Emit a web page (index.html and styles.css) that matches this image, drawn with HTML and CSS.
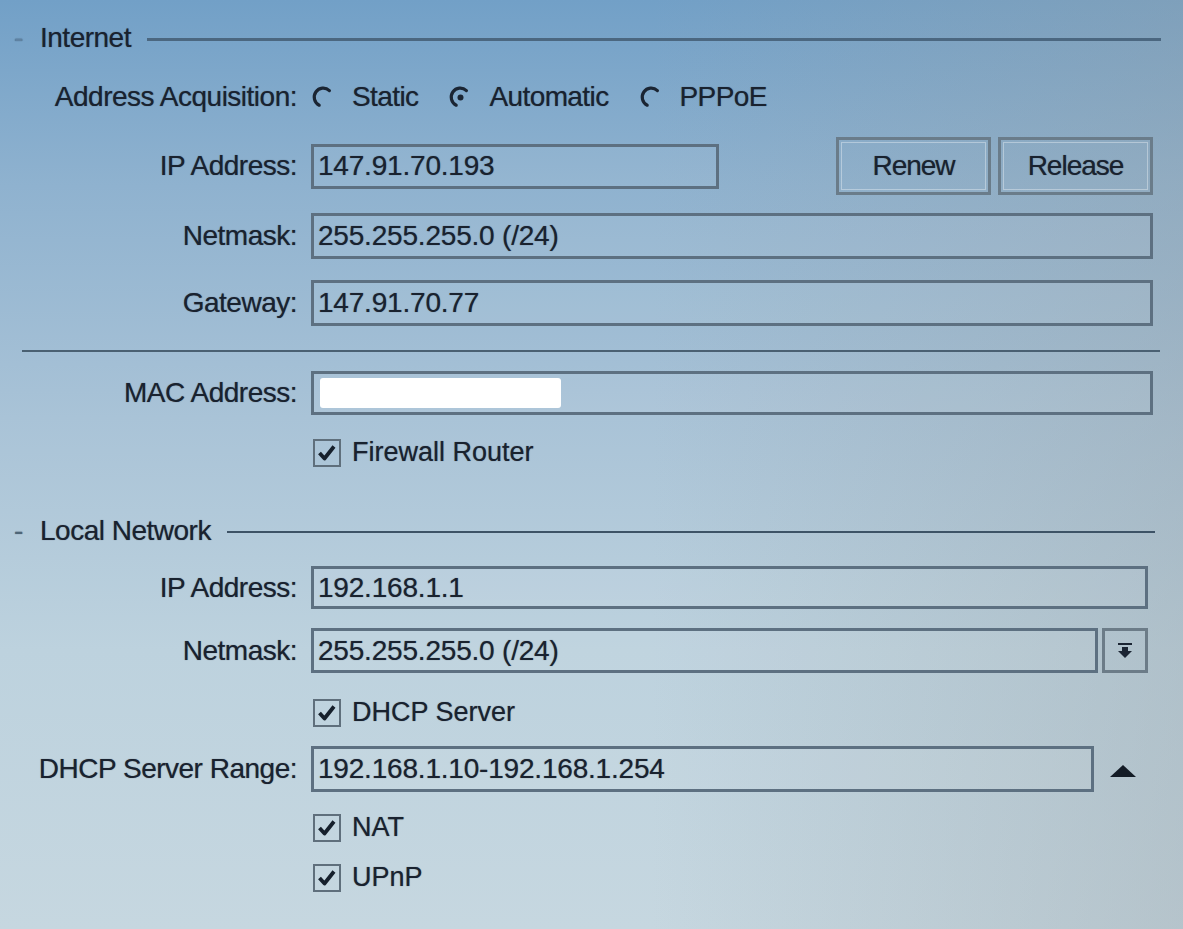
FILE: index.html
```html
<!DOCTYPE html>
<html>
<head>
<meta charset="utf-8">
<link rel="stylesheet" href="styles.css">
</head>
<body>
<div class="page">
  <div class="heading h-internet"><span class="dash">-</span><span class="htext">Internet</span><span class="hline thick"></span></div>

  <div class="row r-acq">
    <div class="label">Address Acquisition:</div>
    <div class="field radios">
      <span class="radio"><svg width="24" height="26" viewBox="0 0 24 26"><path d="M18.4 6.6 A9 9 0 1 0 8.2 21.2" fill="none" stroke="#1b2533" stroke-width="3.2" stroke-linecap="round"/></svg>Static</span>
      <span class="radio"><svg width="24" height="26" viewBox="0 0 24 26"><path d="M18.4 6.6 A9 9 0 1 0 8.2 21.2" fill="none" stroke="#1b2533" stroke-width="3.2" stroke-linecap="round"/><circle cx="12.5" cy="13.5" r="3" fill="#1b2533"/></svg>Automatic</span>
      <span class="radio"><svg width="24" height="26" viewBox="0 0 24 26"><path d="M18.4 6.6 A9 9 0 1 0 8.2 21.2" fill="none" stroke="#1b2533" stroke-width="3.2" stroke-linecap="round"/></svg>PPPoE</span>
    </div>
  </div>

  <div class="row r-ip1">
    <div class="label">IP Address:</div>
    <div class="field split">
      <div class="input short">147.91.70.193</div>
      <div class="buttons">
        <div class="btn">Renew</div>
        <div class="btn">Release</div>
      </div>
    </div>
  </div>

  <div class="row r-nm1">
    <div class="label">Netmask:</div>
    <div class="field"><div class="input">255.255.255.0 (/24)</div></div>
  </div>

  <div class="row r-gw">
    <div class="label">Gateway:</div>
    <div class="field"><div class="input">147.91.70.77</div></div>
  </div>

  <div class="sep"></div>

  <div class="row r-mac">
    <div class="label">MAC Address:</div>
    <div class="field"><div class="input mac"><span class="blank"></span></div></div>
  </div>

  <div class="row r-fw">
    <div class="label"></div>
    <div class="field"><span class="check"><span class="box"><svg width="22" height="22" viewBox="0 0 22 22"><path d="M3.5 11 L8.5 16.5 L18 4.5" fill="none" stroke="#16202c" stroke-width="3.8" stroke-linejoin="round"/></svg></span>Firewall Router</span></div>
  </div>

  <div class="heading h-local"><span class="dash">-</span><span class="htext">Local Network</span><span class="hline"></span></div>

  <div class="row r-ip2">
    <div class="label">IP Address:</div>
    <div class="field"><div class="input">192.168.1.1</div></div>
  </div>

  <div class="row r-nm2">
    <div class="label">Netmask:</div>
    <div class="field split2">
      <div class="input">255.255.255.0 (/24)</div>
      <div class="drop"><svg width="20" height="22" viewBox="0 0 20 22"><rect x="3" y="3" width="14" height="2" fill="#1b2533"/><rect x="7" y="7" width="6" height="5" fill="#1b2533"/><path d="M3 11 L17 11 L10 18 Z" fill="#1b2533"/></svg></div>
    </div>
  </div>

  <div class="row r-dhcp">
    <div class="label"></div>
    <div class="field"><span class="check"><span class="box"><svg width="22" height="22" viewBox="0 0 22 22"><path d="M3.5 11 L8.5 16.5 L18 4.5" fill="none" stroke="#16202c" stroke-width="3.8" stroke-linejoin="round"/></svg></span>DHCP Server</span></div>
  </div>

  <div class="row r-range">
    <div class="label">DHCP Server Range:</div>
    <div class="field split2">
      <div class="input">192.168.1.10-192.168.1.254</div>
      <div class="up"><svg width="30" height="16" viewBox="0 0 30 16"><path d="M2 14 L15 2 L28 14 Z" fill="#141c26"/></svg></div>
    </div>
  </div>

  <div class="row r-nat">
    <div class="label"></div>
    <div class="field"><span class="check"><span class="box"><svg width="22" height="22" viewBox="0 0 22 22"><path d="M3.5 11 L8.5 16.5 L18 4.5" fill="none" stroke="#16202c" stroke-width="3.8" stroke-linejoin="round"/></svg></span>NAT</span></div>
  </div>

  <div class="row r-upnp">
    <div class="label"></div>
    <div class="field"><span class="check"><span class="box"><svg width="22" height="22" viewBox="0 0 22 22"><path d="M3.5 11 L8.5 16.5 L18 4.5" fill="none" stroke="#16202c" stroke-width="3.8" stroke-linejoin="round"/></svg></span>UPnP</span></div>
  </div>
</div>
</body>
</html>
```

FILE: styles.css
```css
html, body {
  margin: 0;
  padding: 0;
  height: 100%;
}
body {
  width: 1183px;
  height: 929px;
  overflow: hidden;
  font-family: "Liberation Sans", Arial, sans-serif;
  font-size: 28px;
  color: #19222f;
  text-shadow: 0 0 1px rgba(20, 30, 45, 0.55);
  background:
    linear-gradient(90deg, rgba(140,150,155,0) 55%, rgba(150,160,165,0.35) 100%),
    linear-gradient(180deg, #72a0c7 0%, #8fb2cf 20%, #a9c3d7 45%, #bdd2de 70%, #c6d7e0 100%);
}
.page {
  display: flex;
  flex-direction: column;
  padding-top: 26px;
}
.heading {
  display: flex;
  align-items: center;
  height: 24px;
  padding-left: 14px;
  padding-right: 22px;
}
.heading .dash {
  color: #5f82a2;
  width: 26px;
}
.heading .htext {
  white-space: nowrap;
  letter-spacing: -0.5px;
}
.hline {
  flex: 1;
  height: 2px;
  background: #3d5366;
  margin-left: 16px;
  margin-top: 2px;
}
.hline.thick {
  height: 3px;
  background: #4b6780;
}
.h-local { margin-top: 54px; padding-right: 28px; }
.h-local .dash { color: #4e6678; width: 26px; }

.row {
  display: grid;
  grid-template-columns: 297px 1fr;
  column-gap: 14px;
  align-items: center;
  padding-right: 30px;
}
.label {
  text-align: right;
  white-space: nowrap;
  letter-spacing: -0.5px;
}
.field {
  display: flex;
  align-items: center;
  min-width: 0;
}
.input {
  box-sizing: border-box;
  flex: 1;
  height: 45px;
  border: 3px solid #5d7081;
  background: rgba(255,255,255,0.06);
  padding-left: 4px;
  display: flex;
  align-items: center;
  white-space: nowrap;
  letter-spacing: -0.2px;
}
.input.short {
  flex: 0 0 408px;
}
.split {
  justify-content: space-between;
}
.buttons {
  display: flex;
  gap: 7px;
}
.btn {
  box-sizing: border-box;
  width: 155px;
  height: 58px;
  border: 3px solid #6a7c8a;
  outline: 1px solid rgba(255,255,255,0.35);
  outline-offset: -6px;
  display: flex;
  align-items: center;
  justify-content: center;
  letter-spacing: -1px;
}
.radio {
  display: inline-flex;
  align-items: center;
  gap: 17px;
  margin-right: 30px;
  letter-spacing: -0.6px;
}
.r-acq { margin-top: 30px; height: 34px; }
.r-ip1 { margin-top: 23px; height: 58px; }
.r-nm1 { margin-top: 18px; }
.r-gw { margin-top: 21px; }
.r-nm1 .input, .r-gw .input { height: 46px; }
.sep {
  margin: 24px 23px 0 22px;
  height: 2px;
  background: #4a6072;
}
.r-mac { margin-top: 19px; }
.r-mac .input { height: 44px; }
.mac { padding-left: 6px; }
.blank {
  display: block;
  width: 241px;
  height: 30px;
  background: #ffffff;
  border-radius: 3px;
}
.check {
  display: inline-flex;
  align-items: center;
  gap: 11px;
  font-size: 27px;
}
.box {
  box-sizing: border-box;
  width: 28px;
  height: 28px;
  border: 2px solid #5f6f7c;
  display: inline-flex;
  align-items: center;
  justify-content: center;
  margin-left: 2px;
}
.r-fw { margin-top: 22px; height: 28px; }

.r-ip2 { margin-top: 23px; padding-right: 35px; }
.r-ip2 .input { height: 43px; }
.r-nm2 { margin-top: 19px; padding-right: 35px; }
.split2 { gap: 4px; }
.drop {
  box-sizing: border-box;
  width: 46px;
  height: 45px;
  border: 3px solid #6c7c88;
  display: flex;
  align-items: center;
  justify-content: center;
}
.r-dhcp { margin-top: 24px; height: 26px; }
.r-range { margin-top: 23px; padding-right: 35px; }
.r-range .input { height: 46px; }
.up {
  width: 50px;
  display: flex;
  justify-content: center;
  padding-top: 4px;
}
.r-nat { margin-top: 20px; height: 26px; }
.r-upnp { margin-top: 24px; height: 26px; }
```
